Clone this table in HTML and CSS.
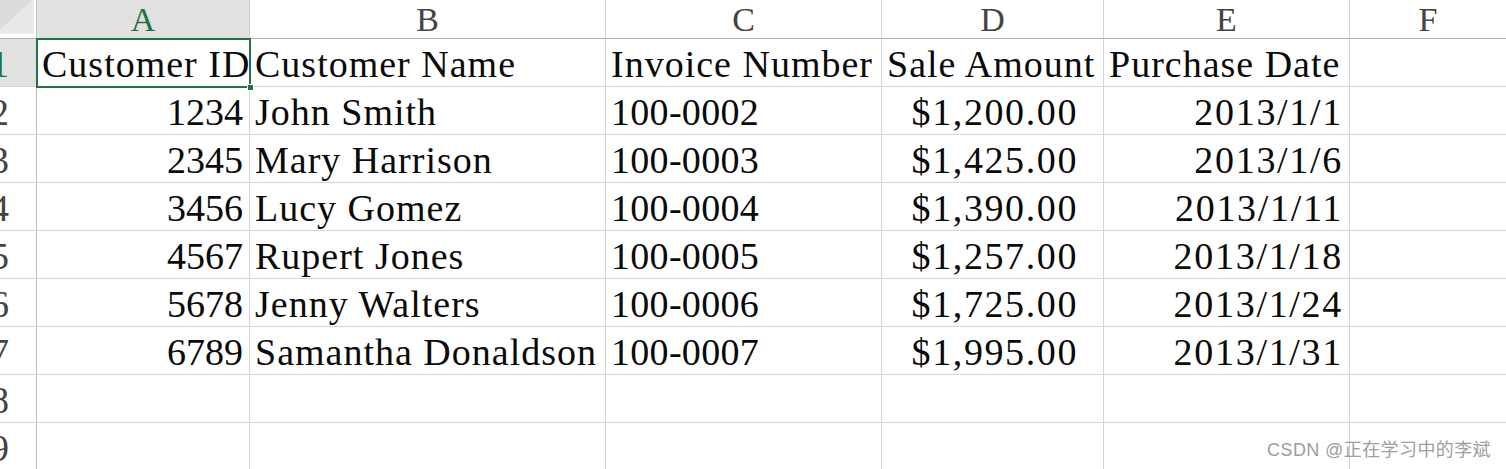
FILE: index.html
```html
<!DOCTYPE html>
<html lang="en">
<head>
<meta charset="utf-8">
<title>Sheet</title>
<link rel="stylesheet" href="styles.css">
</head>
<body>
<div class="sheet">
  <div class="corner"><svg width="34" height="34" viewBox="0 0 34 34"><rect width="34" height="34" fill="#dcdcdc"/><polygon points="0,30 32,0 34,0 34,34 0,34" fill="#e9e9e9"/></svg></div>
  <div class="colhead sel">A</div>
  <div class="colhead">B</div>
  <div class="colhead">C</div>
  <div class="colhead">D</div>
  <div class="colhead">E</div>
  <div class="colhead last">F</div>

  <div class="rowhead sel">1</div>
  <div class="cell txt a1">Customer ID<span class="selbox"><span class="handle"></span></span></div>
  <div class="cell txt">Customer Name</div>
  <div class="cell txt">Invoice Number</div>
  <div class="cell txt">Sale Amount</div>
  <div class="cell txt">Purchase Date</div>
  <div class="cell last"></div>

  <div class="rowhead">2</div>
  <div class="cell num">1234</div>
  <div class="cell txt">John Smith</div>
  <div class="cell inv">100-0002</div>
  <div class="cell money">$1,200.00</div>
  <div class="cell date">2013/1/1</div>
  <div class="cell last"></div>

  <div class="rowhead">3</div>
  <div class="cell num">2345</div>
  <div class="cell txt">Mary Harrison</div>
  <div class="cell inv">100-0003</div>
  <div class="cell money">$1,425.00</div>
  <div class="cell date">2013/1/6</div>
  <div class="cell last"></div>

  <div class="rowhead">4</div>
  <div class="cell num">3456</div>
  <div class="cell txt">Lucy Gomez</div>
  <div class="cell inv">100-0004</div>
  <div class="cell money">$1,390.00</div>
  <div class="cell date">2013/1/11</div>
  <div class="cell last"></div>

  <div class="rowhead">5</div>
  <div class="cell num">4567</div>
  <div class="cell txt">Rupert Jones</div>
  <div class="cell inv">100-0005</div>
  <div class="cell money">$1,257.00</div>
  <div class="cell date">2013/1/18</div>
  <div class="cell last"></div>

  <div class="rowhead">6</div>
  <div class="cell num">5678</div>
  <div class="cell txt">Jenny Walters</div>
  <div class="cell inv">100-0006</div>
  <div class="cell money">$1,725.00</div>
  <div class="cell date">2013/1/24</div>
  <div class="cell last"></div>

  <div class="rowhead">7</div>
  <div class="cell num">6789</div>
  <div class="cell txt">Samantha Donaldson</div>
  <div class="cell inv">100-0007</div>
  <div class="cell money">$1,995.00</div>
  <div class="cell date">2013/1/31</div>
  <div class="cell last"></div>

  <div class="rowhead">8</div>
  <div class="cell"></div>
  <div class="cell"></div>
  <div class="cell"></div>
  <div class="cell"></div>
  <div class="cell"></div>
  <div class="cell last"></div>

  <div class="rowhead">9</div>
  <div class="cell"></div>
  <div class="cell"></div>
  <div class="cell"></div>
  <div class="cell"></div>
  <div class="cell"></div>
  <div class="cell last"></div>
</div>
<div class="watermark">CSDN @正在学习中的李斌</div>
</body>
</html>
```

FILE: styles.css
```css
html, body {
  margin: 0;
  padding: 0;
  background: #ffffff;
  overflow: hidden;
  width: 1506px;
  height: 469px;
}

.sheet {
  display: grid;
  grid-template-columns: 37px 213px 356px 276px 222px 246px 1fr;
  grid-template-rows: 39px repeat(9, 48px);
  font-family: "Liberation Serif", "Times New Roman", serif;
  color: #0a0a0a;
}

.corner {
  box-sizing: border-box;
  border-right: 1px solid #c6c6c6;
  border-bottom: 1px solid #b4b4b4;
  background: #ffffff;
  overflow: hidden;
}

.corner svg {
  display: block;
}

.colhead {
  box-sizing: border-box;
  border-right: 1px solid #d4d4d4;
  border-bottom: 1px solid #b4b4b4;
  text-align: center;
  font-size: 34px;
  line-height: 38px;
  padding-top: 1px;
  color: #444444;
  background: #ffffff;
}

.colhead.sel {
  background: #e1e1e1;
  color: #217346;
}

.colhead.last {
  border-right: none;
}

.rowhead {
  box-sizing: border-box;
  border-right: 1px solid #bdbdbd;
  border-bottom: 1px solid #d4d4d4;
  font-size: 38px;
  line-height: 45px;
  padding-top: 3px;
  text-indent: -10px;
  overflow: hidden;
  white-space: nowrap;
  color: #444444;
}

.rowhead.sel {
  background: #e1e1e1;
  color: #217346;
}

.cell {
  box-sizing: border-box;
  border-right: 1px solid #d4d4d4;
  border-bottom: 1px solid #d4d4d4;
  font-size: 38px;
  line-height: 45px;
  padding: 3px 5px 0 5px;
  white-space: nowrap;
  position: relative;
}

.cell.last {
  border-right: none;
}

.txt {
  letter-spacing: 1px;
}

.inv {
  letter-spacing: 0.3px;
}

.num {
  text-align: right;
  padding-right: 6px;
}

.money {
  text-align: right;
  letter-spacing: 1.6px;
  padding-right: 25px;
}

.date {
  text-align: right;
  letter-spacing: 1.7px;
  padding-right: 6px;
}

.a1 {
  z-index: 2;
}

.selbox {
  position: absolute;
  left: -1px;
  top: -1px;
  right: -2px;
  bottom: -2px;
  border: 2px solid #217346;
  pointer-events: none;
}

.handle {
  position: absolute;
  right: -5px;
  bottom: -5px;
  width: 5px;
  height: 5px;
  background: #217346;
  border: 1px solid #ffffff;
}

.watermark {
  position: absolute;
  right: 15px;
  bottom: 8px;
  font-family: "Liberation Sans", "Noto Sans CJK SC", sans-serif;
  font-size: 18px;
  line-height: 22px;
  color: #9e9e9e;
  letter-spacing: 0.4px;
}
```
